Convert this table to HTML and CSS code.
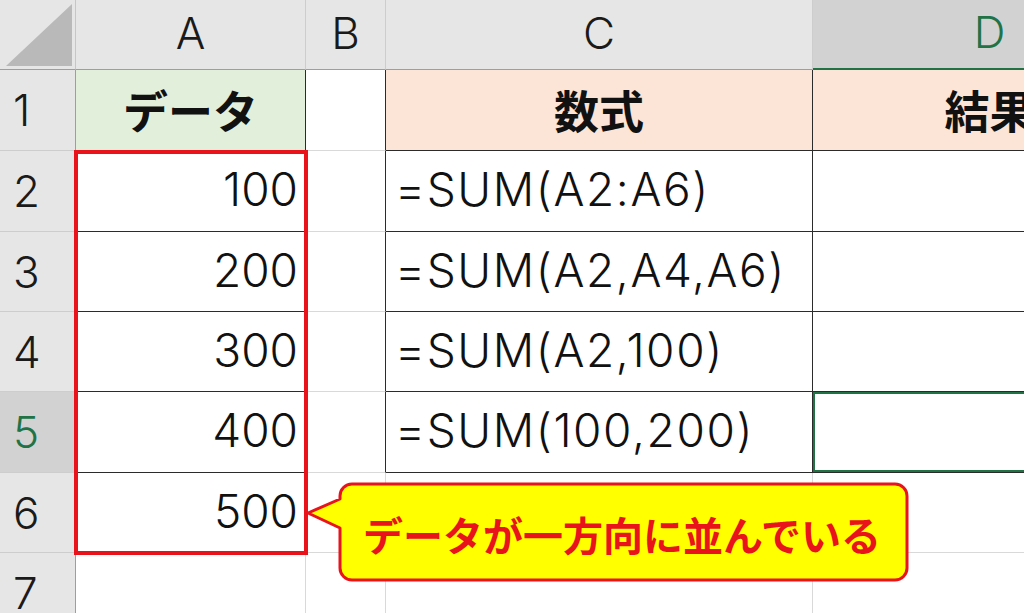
FILE: index.html
```html
<!DOCTYPE html>
<html lang="ja">
<head>
<meta charset="utf-8">
<title>SUM</title>
<link rel="stylesheet" href="styles.css">
</head>
<body>
<div class="page">
  <div class="sheet">
    <div class="corner"><svg width="76" height="70" viewBox="0 0 76 70"><polygon points="6,66 72,66 72,4" fill="#b9b9b9"/></svg></div>
    <div class="colh">A</div>
    <div class="colh">B</div>
    <div class="colh">C</div>
    <div class="colh sel">D</div>

    <div class="rowh">1</div>
    <div class="cell t head green">データ</div>
    <div class="cell edge"></div>
    <div class="cell t head peach">数式</div>
    <div class="cell t head peach">結果</div>

    <div class="rowh">2</div>
    <div class="cell t num">100</div>
    <div class="cell edge"></div>
    <div class="cell t fx">=SUM(A2:A6)</div>
    <div class="cell t"></div>

    <div class="rowh">3</div>
    <div class="cell t num">200</div>
    <div class="cell edge"></div>
    <div class="cell t fx">=SUM(A2,A4,A6)</div>
    <div class="cell t"></div>

    <div class="rowh">4</div>
    <div class="cell t num">300</div>
    <div class="cell edge"></div>
    <div class="cell t fx">=SUM(A2,100)</div>
    <div class="cell t"></div>

    <div class="rowh sel">5</div>
    <div class="cell t num">400</div>
    <div class="cell edge"></div>
    <div class="cell t fx">=SUM(100,200)</div>
    <div class="cell t active"></div>

    <div class="rowh">6</div>
    <div class="cell t num">500</div>
    <div class="cell"></div>
    <div class="cell"></div>
    <div class="cell"></div>

    <div class="rowh">7</div>
    <div class="cell"></div>
    <div class="cell"></div>
    <div class="cell"></div>
    <div class="cell"></div>
  </div>

  <div class="redbox"></div>

  <div class="callout">
    <svg class="bubble" width="606" height="100" viewBox="0 0 606 100">
      <path d="M47,2 H590 A12,12 0 0 1 602,14 V86 A12,12 0 0 1 590,98 H47 A12,12 0 0 1 35,86 V46 L3,31 L35,17 V14 A12,12 0 0 1 47,2 Z" fill="#ffff00" stroke="#e8131b" stroke-width="3" stroke-linejoin="round"/>
    </svg>
    <span class="callout-text">データが一方向に並んでいる</span>
  </div>
</div>
</body>
</html>
```

FILE: styles.css
```css
html, body {
  margin: 0;
  padding: 0;
  background: #ffffff;
}

body {
  width: 1024px;
  height: 613px;
  overflow: hidden;
  font-family: "Noto Sans CJK JP", "Noto Sans", sans-serif;
  color: #111;
}

.page {
  position: relative;
  width: 1024px;
  height: 613px;
  overflow: hidden;
}

.sheet {
  display: grid;
  grid-template-columns: 76px 230px 80px 427px 354px;
  grid-template-rows: 70px 81px 81px 80px 80px 81px 80px 80px;
  width: 1247px;
}

.corner {
  background: #e6e6e6;
  border-right: 1px solid #c6c6c6;
  border-bottom: 1px solid #9e9e9e;
  box-sizing: border-box;
}

.corner svg {
  display: block;
}

.colh {
  box-sizing: border-box;
  background: #e6e6e6;
  border-right: 1px solid #cdcdcd;
  border-bottom: 1px solid #9e9e9e;
  display: flex;
  align-items: center;
  justify-content: center;
  font-family: "Inter", "Noto Sans", sans-serif;
  font-size: 44px;
  font-weight: 300;
  color: #1a1a1a;
  padding-bottom: 4px;
}

.colh.sel {
  background: #d2d2d2;
  color: #217346;
  border-bottom: 2px solid #217346;
}

.rowh {
  box-sizing: border-box;
  background: #e6e6e6;
  border-right: 1px solid #9e9e9e;
  border-bottom: 1px solid #cdcdcd;
  display: flex;
  align-items: center;
  padding-left: 13px;
  font-family: "Inter", "Noto Sans", sans-serif;
  font-size: 44px;
  font-weight: 300;
  color: #1a1a1a;
}

.rowh.sel {
  background: #d2d2d2;
  color: #217346;
}

.cell {
  box-sizing: border-box;
  border-right: 1px solid #d9d9d9;
  border-bottom: 1px solid #d9d9d9;
  display: flex;
  align-items: center;
  white-space: nowrap;
  overflow: hidden;
}

.cell.t {
  border-right-color: #2b2b2b;
  border-bottom-color: #2b2b2b;
}

.cell.edge {
  border-right-color: #2b2b2b;
}

.head {
  justify-content: center;
  font-size: 45px;
  font-weight: 700;
  padding-bottom: 2px;
}

.green {
  background: #e2efda;
}

.peach {
  background: #fce4d6;
}

.num {
  justify-content: flex-end;
  padding-right: 7px;
  font-family: "Inter", "Noto Sans", sans-serif;
  font-size: 46px;
  font-weight: 300;
  padding-bottom: 4px;
}

.fx {
  padding-left: 9px;
  font-family: "Inter", "Noto Sans", sans-serif;
  font-size: 46px;
  font-weight: 300;
  letter-spacing: 1.6px;
  padding-bottom: 4px;
}

.active {
  box-shadow: inset 0 0 0 2px #217346;
}

.redbox {
  position: absolute;
  left: 74px;
  top: 150px;
  width: 234px;
  height: 405px;
  box-sizing: border-box;
  border: 4px solid #e8131b;
}

.callout {
  position: absolute;
  left: 305px;
  top: 482px;
  width: 606px;
  height: 100px;
}

.bubble {
  position: absolute;
  left: 0;
  top: 0;
}

.callout-text {
  position: absolute;
  left: 58px;
  top: 0;
  height: 100px;
  display: flex;
  align-items: center;
  font-size: 40px;
  font-weight: 700;
  color: #e8131b;
  white-space: nowrap;
  padding-top: 2px;
}
```
